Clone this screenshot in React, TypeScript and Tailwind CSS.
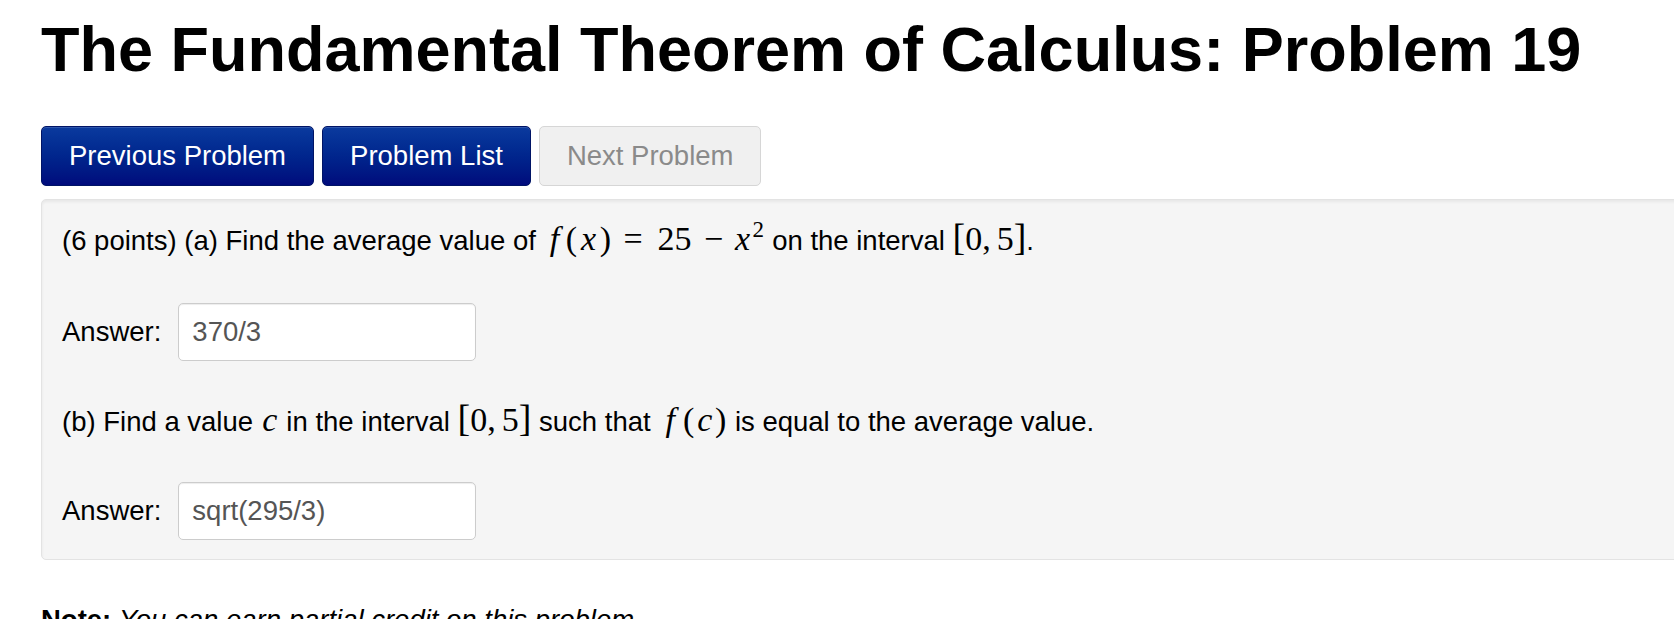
import React from "react";

const sans = "font-['Liberation_Sans',Arial,sans-serif]";
const math = "font-['Liberation_Serif','Times_New_Roman',serif] text-[34px] leading-none";
const blueBtn =
  "rounded-[5px] border border-[#001466] bg-linear-to-b from-[#0b3a9e] to-[#000a7c] px-[27px] py-[10px] text-white leading-[38px] shadow-[inset_0_1px_0_rgba(255,255,255,0.15)]";
const inputCls =
  "w-[298px] h-[58px] rounded-[5px] border border-[#cccccc] bg-white px-[13px] text-[#555555] outline-none shadow-[inset_0_1px_1px_rgba(0,0,0,0.075)]";

// [0, 5] set in TeX style with taller brackets
function Interval() {
  return (
    <span className={math}>
      <span className="text-[38px] leading-[0.7]">[</span>
      0,<span className="inline-block w-[6px]" />5
      <span className="text-[38px] leading-[0.7]">]</span>
    </span>
  );
}

function AnswerRow({ value }: { value: string }) {
  return (
    <div className="flex items-center">
      <span className="mr-[17px]">Answer:</span>
      <input type="text" readOnly value={value} className={inputCls} />
    </div>
  );
}

export default function App() {
  return (
    <div className={`min-h-screen overflow-hidden bg-white text-black ${sans}`}>
      <div className="pl-[41px]">
        <h1 className="mt-[15px] text-[63px] font-bold leading-[69px] whitespace-nowrap">
          The Fundamental Theorem of Calculus: Problem 19
        </h1>

        <div className="mt-[42px] flex gap-[8px] text-[27.5px]">
          <button className={blueBtn}>Previous Problem</button>
          <button className={blueBtn}>Problem List</button>
          <button className="rounded-[5px] border border-[#d6d6d6] bg-[#f0f0f0] px-[27px] py-[10px] leading-[38px] text-[#8a8a8a]">
            Next Problem
          </button>
        </div>

        {/* problem body */}
        <div className="mt-[13px] mr-[-20px] rounded-[5px] border border-[#e3e3e3] bg-[#f5f5f5] pl-[20px] pt-[18px] pb-[19px] text-[27.5px] leading-[38px] shadow-[inset_0_2px_3px_rgba(0,0,0,0.06)]">
          <p className="whitespace-nowrap">
            (6 points) (a) Find the average value of{" "}
            <span className={math}>
              <span className="inline-block w-[22px] text-center italic">f</span>
              <span className="inline-block w-[12px] text-center">(</span>
              <span className="inline-block w-[22px] text-center italic">x</span>
              <span className="inline-block w-[12px] text-center">)</span>
              <span className="inline-block w-[43px] text-center">=</span>
              <span className="inline-block w-[40px] text-center">25</span>
              <span className="inline-block w-[38px] text-center">−</span>
              <span className="inline-block w-[20px] text-center italic">x</span>
              <span className="inline-block w-[12px] align-[13px] text-[23px]">2</span>
            </span>{" "}
            on the interval <Interval />.
          </p>

          <div className="mt-[43px]">
            <AnswerRow value="370/3" />
          </div>

          <p className="mt-[42px] whitespace-nowrap">
            (b) Find a value{" "}
            <span className={math}>
              <span className="inline-block w-[18px] text-center italic">c</span>
            </span>{" "}
            in the interval <Interval /> such that{" "}
            <span className={math}>
              <span className="inline-block w-[24px] text-center italic">f</span>
              <span className="inline-block w-[13px] text-center">(</span>
              <span className="inline-block w-[19px] text-center italic">c</span>
              <span className="inline-block w-[13px] text-center">)</span>
            </span>{" "}
            is equal to the average value.
          </p>

          <div className="mt-[41px]">
            <AnswerRow value="sqrt(295/3)" />
          </div>
        </div>

        <p className="mt-[41px] text-[27.5px] leading-[38px] whitespace-nowrap">
          <b>Note:</b> <i>You can earn partial credit on this problem.</i>
        </p>
      </div>
    </div>
  );
}
